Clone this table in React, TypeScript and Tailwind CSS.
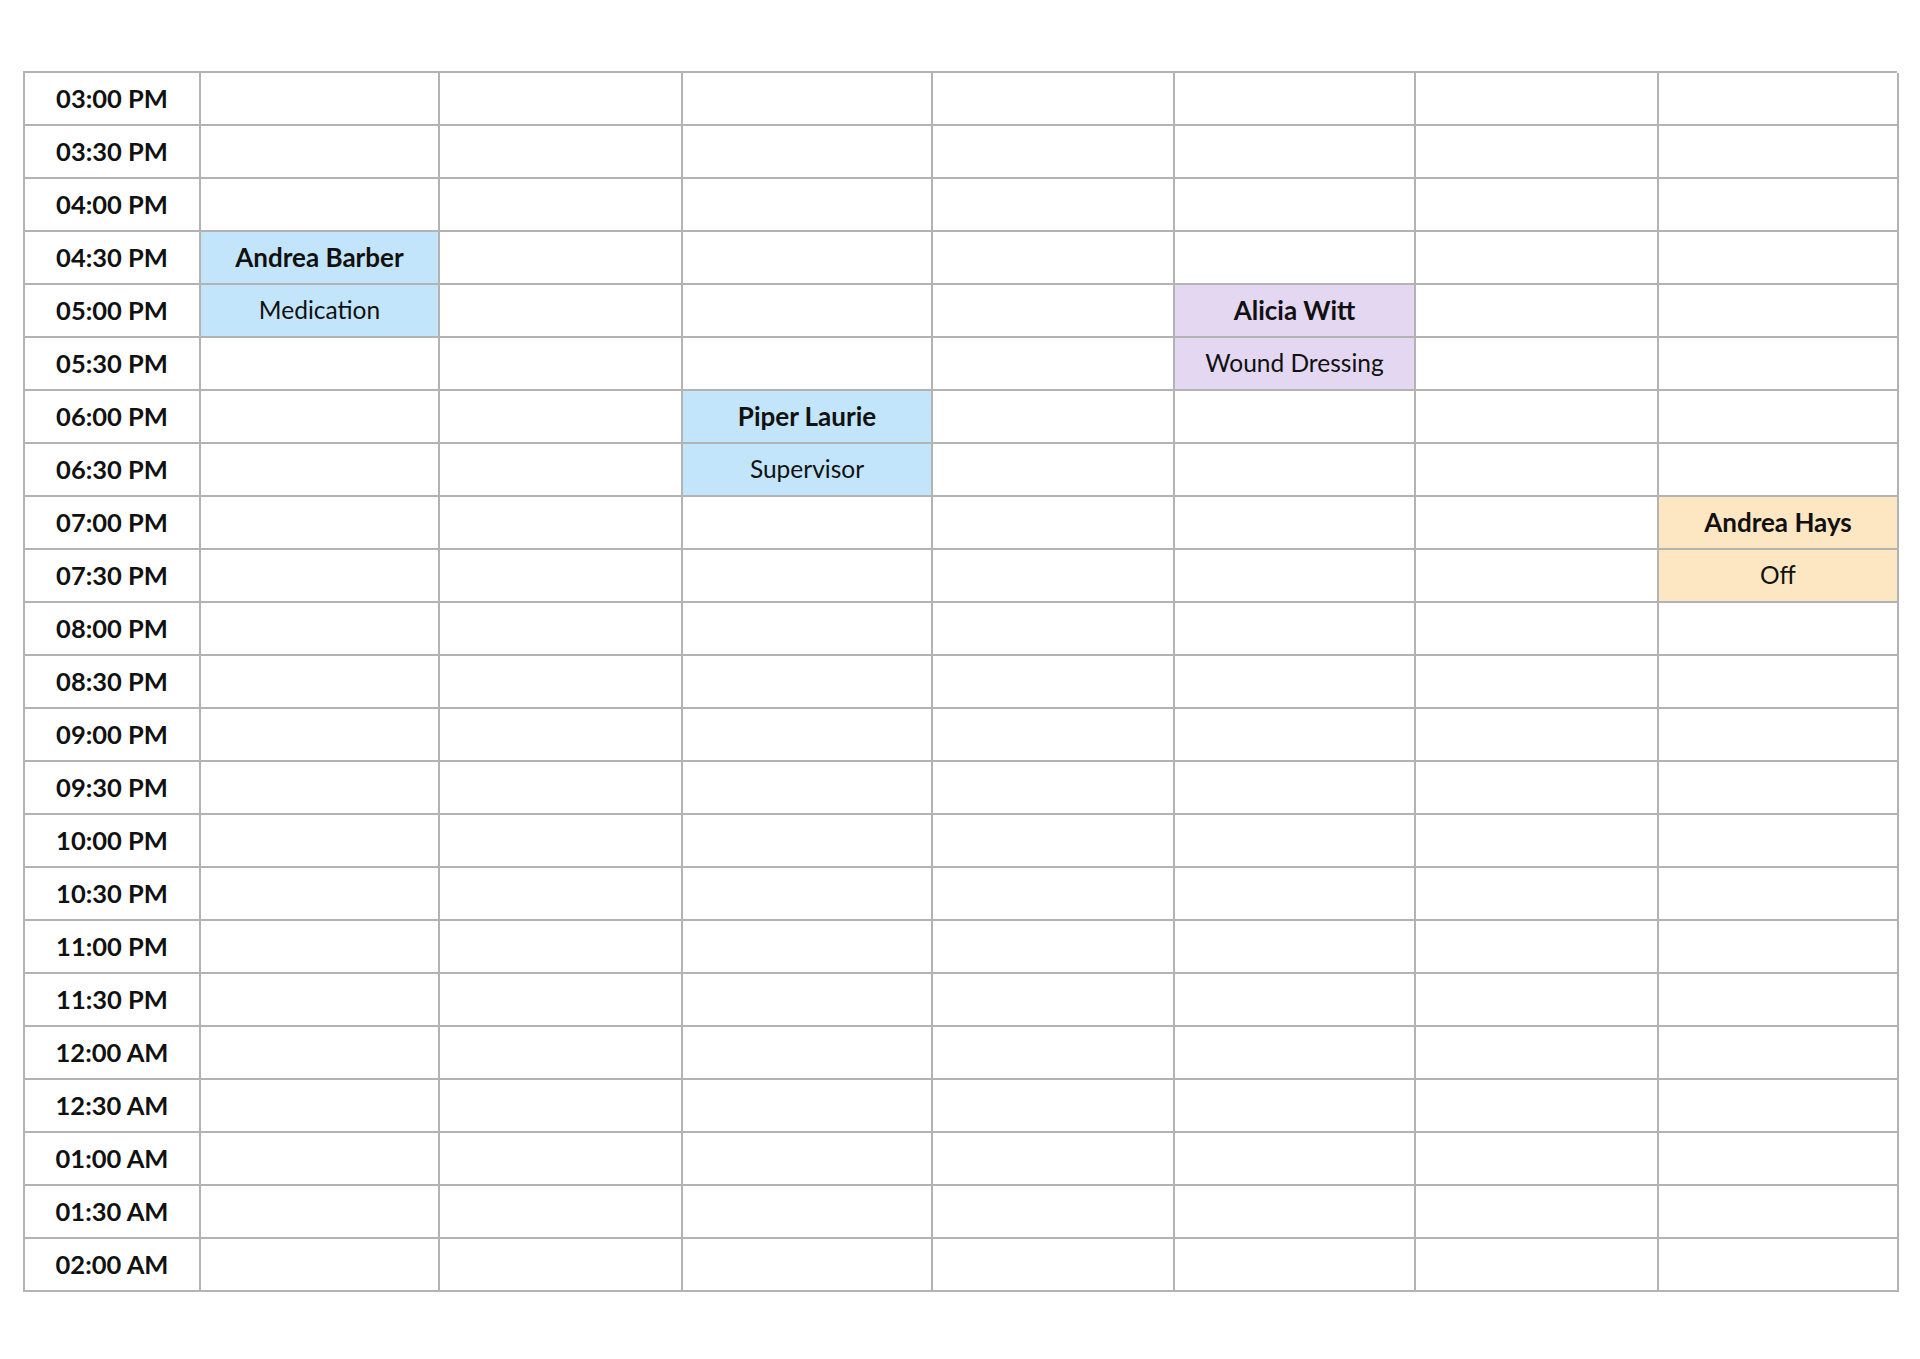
const times = [
  "03:00 PM", "03:30 PM", "04:00 PM", "04:30 PM", "05:00 PM", "05:30 PM",
  "06:00 PM", "06:30 PM", "07:00 PM", "07:30 PM", "08:00 PM", "08:30 PM",
  "09:00 PM", "09:30 PM", "10:00 PM", "10:30 PM", "11:00 PM", "11:30 PM",
  "12:00 AM", "12:30 AM", "01:00 AM", "01:30 AM", "02:00 AM",
];

type Shift = { row: number; col: number; name: string; role: string; color: string };

const shifts: Shift[] = [
  { row: 3, col: 0, name: "Andrea Barber", role: "Medication", color: "bg-[#c3e5fb]" },
  { row: 6, col: 2, name: "Piper Laurie", role: "Supervisor", color: "bg-[#c3e5fb]" },
  { row: 4, col: 4, name: "Alicia Witt", role: "Wound Dressing", color: "bg-[#e3d7f1]" },
  { row: 8, col: 6, name: "Andrea Hays", role: "Off", color: "bg-[#fde6c2]" },
];

function cellFor(row: number, col: number) {
  for (const s of shifts) {
    if (s.col !== col) continue;
    if (s.row === row) return { text: s.name, bold: true, color: s.color };
    if (s.row + 1 === row) return { text: s.role, bold: false, color: s.color };
  }
  return null;
}

export default function App() {
  return (
    <div
      className="min-h-[1359px] bg-white pt-[71px] px-[23px] text-[#111111]"
      style={{ fontFamily: "Lato, 'Noto Sans', sans-serif" }}
    >
      <div className="grid grid-cols-[176px_239px_243px_250px_242px_241px_243px_240px] border-l-2 border-t-2 border-[#b3b3b3]">
        {times.map((t, r) => (
          <div key={t} className="contents">
            <div className="h-[53px] flex items-center justify-center border-r-2 border-b-2 border-[#b3b3b3] text-[25.5px] font-bold">
              {t}
            </div>
            {Array.from({ length: 7 }).map((_, c) => {
              const cell = cellFor(r, c);
              return (
                <div
                  key={c}
                  className={`h-[53px] flex items-center justify-center border-r-2 border-b-2 border-[#b3b3b3] ${
                    cell ? cell.color : "bg-white"
                  } ${cell && cell.bold ? "font-bold text-[26px]" : "font-normal text-[24.5px]"}`}
                >
                  {cell ? cell.text : null}
                </div>
              );
            })}
          </div>
        ))}
      </div>
    </div>
  );
}
